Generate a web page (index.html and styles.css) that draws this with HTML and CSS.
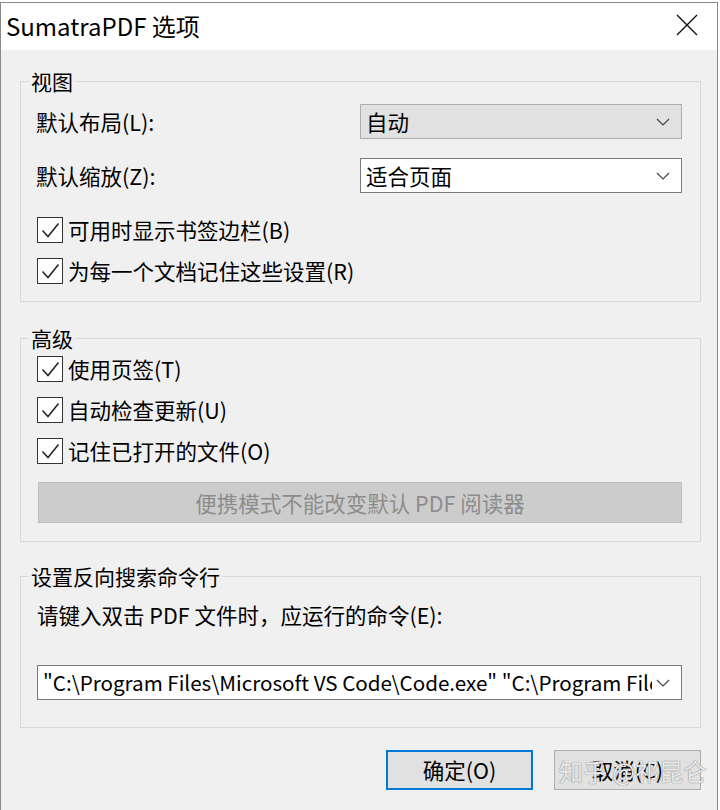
FILE: index.html
```html
<!DOCTYPE html>
<html lang="zh-CN">
<head>
<meta charset="utf-8">
<title>SumatraPDF 选项</title>
<link rel="stylesheet" href="styles.css">
</head>
<body>
<div class="window">
  <div class="titlebar">
    <span class="title">SumatraPDF 选项</span>
    <svg class="close" width="22" height="22" viewBox="0 0 22 22"><path d="M1 1 L21 21 M21 1 L1 21" stroke="#111" stroke-width="1.4" fill="none"/></svg>
  </div>
  <div class="client">
    <fieldset class="group group-view">
      <legend>视图</legend>
      <div class="form-row">
        <span class="label">默认布局(L):</span>
        <div class="combo combo-ro"><span class="combo-text">自动</span><svg class="chev" width="14" height="8" viewBox="0 0 14 8"><path d="M1 1 L7 7 L13 1" stroke="#444" stroke-width="1.2" fill="none"/></svg></div>
      </div>
      <div class="form-row row-gap">
        <span class="label">默认缩放(Z):</span>
        <div class="combo"><span class="combo-text">适合页面</span><svg class="chev" width="14" height="8" viewBox="0 0 14 8"><path d="M1 1 L7 7 L13 1" stroke="#444" stroke-width="1.2" fill="none"/></svg></div>
      </div>
      <div class="check-row first-check">
        <span class="box"><svg width="23" height="23" viewBox="0 0 23 23"><path d="M3.5 11.5 L9 17.5 L19.5 4.5" stroke="#222" stroke-width="1.5" fill="none"/></svg></span>
        <span class="check-label">可用时显示书签边栏(B)</span>
      </div>
      <div class="check-row">
        <span class="box"><svg width="23" height="23" viewBox="0 0 23 23"><path d="M3.5 11.5 L9 17.5 L19.5 4.5" stroke="#222" stroke-width="1.5" fill="none"/></svg></span>
        <span class="check-label">为每一个文档记住这些设置(R)</span>
      </div>
    </fieldset>

    <fieldset class="group group-adv">
      <legend>高级</legend>
      <div class="check-row">
        <span class="box"><svg width="23" height="23" viewBox="0 0 23 23"><path d="M3.5 11.5 L9 17.5 L19.5 4.5" stroke="#222" stroke-width="1.5" fill="none"/></svg></span>
        <span class="check-label">使用页签(T)</span>
      </div>
      <div class="check-row">
        <span class="box"><svg width="23" height="23" viewBox="0 0 23 23"><path d="M3.5 11.5 L9 17.5 L19.5 4.5" stroke="#222" stroke-width="1.5" fill="none"/></svg></span>
        <span class="check-label">自动检查更新(U)</span>
      </div>
      <div class="check-row">
        <span class="box"><svg width="23" height="23" viewBox="0 0 23 23"><path d="M3.5 11.5 L9 17.5 L19.5 4.5" stroke="#222" stroke-width="1.5" fill="none"/></svg></span>
        <span class="check-label">记住已打开的文件(O)</span>
      </div>
      <div class="disabled-btn">便携模式不能改变默认 PDF 阅读器</div>
    </fieldset>

    <fieldset class="group group-cmd">
      <legend>设置反向搜索命令行</legend>
      <div class="cmd-label">请键入双击 PDF 文件时，应运行的命令(E):</div>
      <div class="combo combo-wide"><span class="combo-text path-text">"C:\Program Files\Microsoft VS Code\Code.exe" "C:\Program Files\Microsoft VS Code\resources\app\out\cli.js" --ns -g "%f:%l"</span><svg class="chev chev-tight" width="14" height="8" viewBox="0 0 14 8"><path d="M1 1 L7 7 L13 1" stroke="#444" stroke-width="1.2" fill="none"/></svg></div>
    </fieldset>

    <div class="buttons">
      <div class="btn btn-default">确定(O)</div>
      <div class="btn">取消(C)</div>
      <div class="watermark">知乎 @祁昆仑</div>
    </div>
  </div>
</div>
</body>
</html>
```

FILE: styles.css
```css
html, body {
  margin: 0;
  padding: 0;
}
body {
  background: #ffffff;
  font-family: "Noto Sans CJK SC", "Noto Sans", sans-serif;
  color: #000;
  width: 720px;
  height: 810px;
  overflow: hidden;
}
.window {
  margin-top: 2px;
  width: 716px;
  height: 808px;
  border-top: 1px solid #8a8a8a;
  border-left: 1px solid #8a8a8a;
  border-right: 1px solid #8a8a8a;
  display: flex;
  flex-direction: column;
}
.titlebar {
  height: 47px;
  flex: none;
  background: #fff;
  display: flex;
  align-items: center;
  justify-content: space-between;
  padding: 0 19px 0 5px;
}
.title {
  font-size: 24px;
  line-height: 28px;
  margin-top: -2px;
}
.close {
  display: block;
  margin-top: -3px;
}
.client {
  flex: 1;
  background: #f0f0f0;
  padding: 19px 16px 0 19px;
}
.group {
  margin: 0;
  border: 1px solid #d9d9d9;
  padding: 0 18px 0 15px;
  min-width: 0;
}
.group legend {
  font-size: 21px;
  line-height: 24px;
  margin-left: -7px;
  padding: 0 2px;
}
.group-view {
  padding-top: 11px;
  padding-bottom: 17px;
}
.group-adv {
  margin-top: 24px;
  padding-top: 6px;
  padding-bottom: 18px;
}
.group-cmd {
  margin-top: 22px;
  padding-top: 15px;
  padding-bottom: 27px;
}
.form-row {
  display: flex;
  align-items: center;
  height: 35px;
}
.row-gap {
  margin-top: 19px;
}
.label {
  flex: 1;
  font-size: 21.5px;
  line-height: 24px;
}
.combo {
  box-sizing: border-box;
  width: 322px;
  height: 35px;
  border: 1px solid #7a7a7a;
  background: #fff;
  display: flex;
  align-items: center;
  padding: 0 11px 0 5px;
  overflow: hidden;
}
.combo-ro {
  background: #e1e1e1;
  border-color: #adadad;
}
.combo-text {
  flex: 1;
  font-size: 21.5px;
  line-height: 31px;
  white-space: nowrap;
  overflow: hidden;
}
.path-text {
  font-size: 20.6px;
}
.chev {
  flex: none;
  margin-left: 14px;
}
.chev-tight {
  margin-left: 4px;
}
.combo-wide {
  width: 645px;
  margin-top: 38px;
  margin-left: 1px;
}
.check-row {
  display: flex;
  align-items: center;
  height: 26px;
  margin-top: 15px;
  margin-left: 1px;
}
.group-adv .check-row:first-of-type {
  margin-top: 0;
}
.first-check {
  margin-top: 24px;
}
.box {
  box-sizing: border-box;
  width: 26px;
  height: 26px;
  border: 1.5px solid #333;
  background: #fff;
  display: flex;
  align-items: center;
  justify-content: center;
  flex: none;
}
.box svg {
  display: block;
}
.check-label {
  font-size: 21.5px;
  line-height: 24px;
  margin-left: 5px;
}
.disabled-btn {
  box-sizing: border-box;
  margin-top: 18px;
  margin-left: 2px;
  height: 41px;
  background: #cccccc;
  border: 1px solid #bfbfbf;
  color: #8c8c8c;
  font-size: 21.5px;
  line-height: 24px;
  display: flex;
  align-items: center;
  justify-content: center;
}
.cmd-label {
  font-size: 21.5px;
  line-height: 24px;
  margin-left: 1px;
}
.buttons {
  position: relative;
  margin-top: 22px;
  display: flex;
  justify-content: flex-end;
  gap: 21px;
}
.btn {
  box-sizing: border-box;
  width: 147px;
  height: 40px;
  background: #e1e1e1;
  border: 1px solid #adadad;
  font-size: 21.5px;
  line-height: 24px;
  display: flex;
  align-items: center;
  justify-content: center;
}
.btn-default {
  border: 2px solid #0078d7;
}
.watermark {
  position: absolute;
  right: -6px;
  top: 6px;
  font-size: 24px;
  line-height: 30px;
  color: rgba(255, 255, 255, 0.85);
  text-shadow: 0 0 1px #777, 0 0 1px #999;
}
```
